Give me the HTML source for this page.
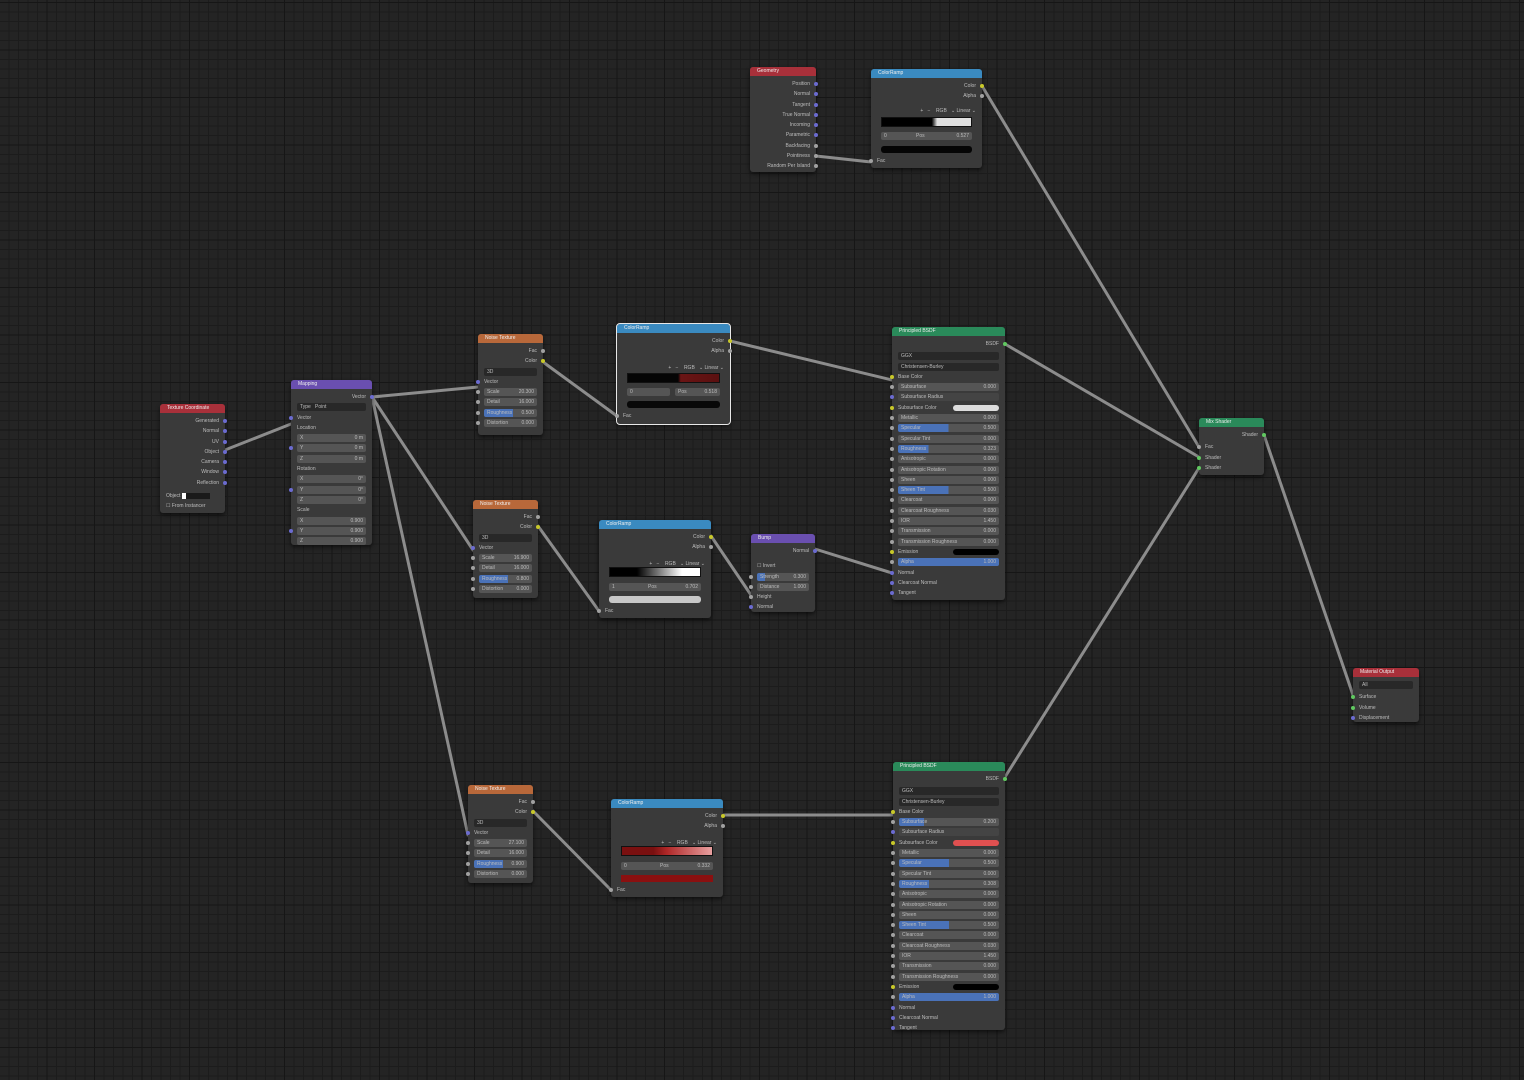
<!DOCTYPE html>
<html><head><meta charset="utf-8"><style>
*{box-sizing:border-box;margin:0;padding:0}
body{width:1524px;height:1080px;overflow:hidden;background:#242424;
background-image:linear-gradient(90deg,#161616 1px,transparent 1px),linear-gradient(#161616 1px,transparent 1px),linear-gradient(90deg,#1c1c1c 1px,transparent 1px),linear-gradient(#1c1c1c 1px,transparent 1px);
background-size:47.5px 47.5px,47.5px 47.5px,9.5px 9.5px,9.5px 9.5px;background-position:-1px 2px;position:relative;font-family:"Liberation Sans",sans-serif}
svg{position:absolute;left:0;top:0}
.n{position:absolute;background:#3a3a3a;border-radius:3px;font-size:5px;color:#bdbdbd;box-shadow:0 2px 4px rgba(0,0,0,.6)}
.sel{outline:1px solid #e8e8e8}
.h{height:9px;border-radius:3px 3px 0 0;color:#eee;padding-left:7px;line-height:9px;margin-bottom:3px}
.r{height:10.3px;line-height:10.3px;position:relative;padding:0 6px;white-space:nowrap}
.o{text-align:right}
.s{position:absolute;width:4px;height:4px;border-radius:50%;top:3px;background:#a1a1a1}
.o .s{right:-2px}.i .s{left:-2px}
.v{background:#6b6bd0}.y{background:#c8c829}.g{background:#60c860}
.f{position:absolute;left:6px;right:6px;top:1px;height:8px;background:#555;border-radius:2px;line-height:8px;padding:0 3px;display:flex;justify-content:space-between;overflow:hidden}
.d{position:absolute;left:6px;right:6px;top:1px;height:8px;background:#282828;border-radius:2px;line-height:8px;padding:0 3px}
.b{background:linear-gradient(90deg,#4a72b8 var(--p),#555 var(--p))}
.ramp{position:absolute;left:10px;right:10px;height:10px;border:1px solid #111}
</style></head><body>
<svg width="1524" height="1080"><g fill="none" stroke="#8c8c8c" stroke-width="3" stroke-linecap="round">
<path d="M225 450 L291 424"/>
<path d="M372 397 L478 387"/>
<path d="M372 397 L473 550"/>
<path d="M372 397 L468 835"/>
<path d="M543 362 L617 416"/>
<path d="M730 341 L892 380"/>
<path d="M538 526 L599 611"/>
<path d="M711 536 L751 595"/>
<path d="M815 549 L892 573"/>
<path d="M533 811 L611 890"/>
<path d="M723 815 L893 815"/>
<path d="M816 156 L871 162"/>
<path d="M982 86 L1199 447"/>
<path d="M1005 344 L1199 457"/>
<path d="M1005 777 L1199 468"/>
<path d="M1264 435 L1353 695"/>
</g></svg>

<div class="n" style="left:160px;top:404px;width:65px;height:109px">
<div class="h" style="background:#a8303a">Texture Coordinate</div>
<div class="r o">Generated<i class="s v"></i></div><div class="r o">Normal<i class="s v"></i></div><div class="r o">UV<i class="s v"></i></div><div class="r o">Object<i class="s v"></i></div><div class="r o">Camera<i class="s v"></i></div><div class="r o">Window<i class="s v"></i></div><div class="r o">Reflection<i class="s v"></i></div>
<div class="r" style="margin-top:3px">Object <span style="display:inline-block;width:28px;height:6px;background:#1a1a1a;vertical-align:middle;border-left:4px solid #fff"></span></div>
<div class="r">☐ From Instancer</div>
</div>

<div class="n" style="left:291px;top:380px;width:81px;height:165px">
<div class="h" style="background:#6a4fb0">Mapping</div>
<div class="r o">Vector<i class="s v"></i></div>
<div class="r"><div class="d">Type &nbsp; Point</div></div>
<div class="r i">Vector<i class="s v"></i></div>
<div class="r">Location</div>
<div class="r"><div class="f"><span>X</span><span>0 m</span></div></div>
<div class="r i"><i class="s v"></i><div class="f"><span>Y</span><span>0 m</span></div></div>
<div class="r"><div class="f"><span>Z</span><span>0 m</span></div></div>
<div class="r">Rotation</div>
<div class="r"><div class="f"><span>X</span><span>0°</span></div></div>
<div class="r i"><i class="s v"></i><div class="f"><span>Y</span><span>0°</span></div></div>
<div class="r"><div class="f"><span>Z</span><span>0°</span></div></div>
<div class="r">Scale</div>
<div class="r"><div class="f"><span>X</span><span>0.900</span></div></div>
<div class="r i"><i class="s v"></i><div class="f"><span>Y</span><span>0.900</span></div></div>
<div class="r"><div class="f"><span>Z</span><span>0.900</span></div></div>
</div>

<div class="n" style="left:478px;top:334px;width:65px;height:101px">
<div class="h" style="background:#b8683a">Noise Texture</div>
<div class="r o">Fac<i class="s"></i></div><div class="r o">Color<i class="s y"></i></div>
<div class="r"><div class="d">3D</div></div>
<div class="r i">Vector<i class="s v"></i></div>
<div class="r i"><i class="s"></i><div class="f"><span>Scale</span><span>20.300</span></div></div>
<div class="r i"><i class="s"></i><div class="f"><span>Detail</span><span>16.000</span></div></div>
<div class="r i"><i class="s"></i><div class="f b" style="--p:55%"><span>Roughness</span><span>0.500</span></div></div>
<div class="r i"><i class="s"></i><div class="f"><span>Distortion</span><span>0.000</span></div></div>
</div>

<div class="n" style="left:473px;top:500px;width:65px;height:98px">
<div class="h" style="background:#b8683a">Noise Texture</div>
<div class="r o">Fac<i class="s"></i></div><div class="r o">Color<i class="s y"></i></div>
<div class="r"><div class="d">3D</div></div>
<div class="r i">Vector<i class="s v"></i></div>
<div class="r i"><i class="s"></i><div class="f"><span>Scale</span><span>16.900</span></div></div>
<div class="r i"><i class="s"></i><div class="f"><span>Detail</span><span>16.000</span></div></div>
<div class="r i"><i class="s"></i><div class="f b" style="--p:55%"><span>Roughness</span><span>0.800</span></div></div>
<div class="r i"><i class="s"></i><div class="f"><span>Distortion</span><span>0.000</span></div></div>
</div>

<div class="n" style="left:468px;top:785px;width:65px;height:98px">
<div class="h" style="background:#b8683a">Noise Texture</div>
<div class="r o">Fac<i class="s"></i></div><div class="r o">Color<i class="s y"></i></div>
<div class="r"><div class="d">3D</div></div>
<div class="r i">Vector<i class="s v"></i></div>
<div class="r i"><i class="s"></i><div class="f"><span>Scale</span><span>27.100</span></div></div>
<div class="r i"><i class="s"></i><div class="f"><span>Detail</span><span>16.000</span></div></div>
<div class="r i"><i class="s"></i><div class="f b" style="--p:55%"><span>Roughness</span><span>0.900</span></div></div>
<div class="r i"><i class="s"></i><div class="f"><span>Distortion</span><span>0.000</span></div></div>
</div>

<div class="n sel" style="left:617px;top:324px;width:113px;height:100px">
<div class="h" style="background:#3a8ac0">ColorRamp</div>
<div class="r o">Color<i class="s y"></i></div><div class="r o">Alpha<i class="s"></i></div>
<div class="r o" style="margin-top:6px">+ &nbsp; − &nbsp;&nbsp; RGB &nbsp; ⌄ Linear ⌄</div>
<div class="ramp" style="top:49px;background:linear-gradient(90deg,#050505 55%,#6a1414 58%,#5a1010)"></div>
<div class="f" style="top:64px;left:10px;right:60px"><span>0</span></div>
<div class="f" style="top:64px;left:58px;right:10px"><span>Pos</span><span>0.518</span></div>
<div class="ramp" style="top:77px;height:7px;border-radius:3px;background:#080808;border:none"></div>
<div class="r i" style="position:absolute;top:87px;width:100%">Fac<i class="s"></i></div>
</div>

<div class="n" style="left:599px;top:520px;width:112px;height:98px">
<div class="h" style="background:#3a8ac0">ColorRamp</div>
<div class="r o">Color<i class="s y"></i></div><div class="r o">Alpha<i class="s"></i></div>
<div class="r o" style="margin-top:6px">+ &nbsp; − &nbsp;&nbsp; RGB &nbsp; ⌄ Linear ⌄</div>
<div class="ramp" style="top:47px;background:linear-gradient(90deg,#000 30%,#fff 80%,#fff)"></div>
<div class="f" style="top:63px;left:10px;right:60px"><span>1</span></div>
<div class="f" style="top:63px;left:46px;right:10px"><span>Pos</span><span>0.702</span></div>
<div class="ramp" style="top:76px;height:7px;border-radius:3px;background:#c8c8c8;border:none"></div>
<div class="r i" style="position:absolute;top:86px;width:100%">Fac<i class="s"></i></div>
</div>

<div class="n" style="left:611px;top:799px;width:112px;height:98px">
<div class="h" style="background:#3a8ac0">ColorRamp</div>
<div class="r o">Color<i class="s y"></i></div><div class="r o">Alpha<i class="s"></i></div>
<div class="r o" style="margin-top:6px">+ &nbsp; − &nbsp;&nbsp; RGB &nbsp; ⌄ Linear ⌄</div>
<div class="ramp" style="top:47px;background:linear-gradient(90deg,#7a1010 35%,#b02828 50%,#e8a0a0)"></div>
<div class="f" style="top:63px;left:10px;right:60px"><span>0</span></div>
<div class="f" style="top:63px;left:46px;right:10px"><span>Pos</span><span>0.332</span></div>
<div class="ramp" style="top:76px;height:7px;background:#8a1010;border:none"></div>
<div class="r i" style="position:absolute;top:86px;width:100%">Fac<i class="s"></i></div>
</div>

<div class="n" style="left:751px;top:534px;width:64px;height:78px">
<div class="h" style="background:#6a4fb0">Bump</div>
<div class="r o">Normal<i class="s v"></i></div>
<div class="r" style="margin-top:5px">☐ Invert</div>
<div class="r i"><i class="s"></i><div class="f b" style="--p:15%"><span>Strength</span><span>0.300</span></div></div>
<div class="r i"><i class="s"></i><div class="f"><span>Distance</span><span>1.000</span></div></div>
<div class="r i">Height<i class="s"></i></div>
<div class="r i">Normal<i class="s v"></i></div>
</div>

<div class="n" style="left:750px;top:67px;width:66px;height:105px">
<div class="h" style="background:#a8303a">Geometry</div>
<div class="r o">Position<i class="s v"></i></div><div class="r o">Normal<i class="s v"></i></div><div class="r o">Tangent<i class="s v"></i></div><div class="r o">True Normal<i class="s v"></i></div><div class="r o">Incoming<i class="s v"></i></div><div class="r o">Parametric<i class="s v"></i></div><div class="r o">Backfacing<i class="s"></i></div><div class="r o">Pointiness<i class="s"></i></div><div class="r o">Random Per Island<i class="s"></i></div>
</div>

<div class="n" style="left:871px;top:69px;width:111px;height:99px">
<div class="h" style="background:#3a8ac0">ColorRamp</div>
<div class="r o">Color<i class="s y"></i></div><div class="r o">Alpha<i class="s"></i></div>
<div class="r o" style="margin-top:4px">+ &nbsp; − &nbsp;&nbsp; RGB &nbsp; ⌄ Linear ⌄</div>
<div class="ramp" style="top:48px;background:linear-gradient(90deg,#000 56%,#e0e0e0 62%)"></div>
<div class="f" style="top:63px;left:10px;right:60px"><span>0</span></div>
<div class="f" style="top:63px;left:42px;right:10px"><span>Pos</span><span>0.527</span></div>
<div class="ramp" style="top:77px;height:7px;border-radius:3px;background:#050505;border:none"></div>
<div class="r i" style="position:absolute;top:87px;width:100%">Fac<i class="s"></i></div>
</div>

<div class="n" style="left:892px;top:327px;width:113px;height:273px">
<div class="h" style="background:#2a8a5a">Principled BSDF</div>
<div class="r o">BSDF<i class="s g"></i></div>
<div class="r" style="margin-top:2px"><div class="d">GGX</div></div>
<div class="r"><div class="d">Christensen-Burley</div></div>
<div class="r i">Base Color<i class="s y"></i></div>
<div class="r i"><i class="s"></i><div class="f"><span>Subsurface</span><span>0.000</span></div></div>
<div class="r i"><i class="s v"></i><div class="d" style="background:#444">Subsurface Radius</div></div>
<div class="r i"><i class="s y"></i>Subsurface Color<span style="position:absolute;right:6px;top:2px;width:46px;height:6px;border-radius:3px;background:#ddd"></span></div>
<div class="r i"><i class="s"></i><div class="f"><span>Metallic</span><span>0.000</span></div></div>
<div class="r i"><i class="s"></i><div class="f b" style="--p:50%"><span>Specular</span><span>0.500</span></div></div>
<div class="r i"><i class="s"></i><div class="f"><span>Specular Tint</span><span>0.000</span></div></div>
<div class="r i"><i class="s"></i><div class="f b" style="--p:30%"><span>Roughness</span><span>0.323</span></div></div>
<div class="r i"><i class="s"></i><div class="f"><span>Anisotropic</span><span>0.000</span></div></div>
<div class="r i"><i class="s"></i><div class="f"><span>Anisotropic Rotation</span><span>0.000</span></div></div>
<div class="r i"><i class="s"></i><div class="f"><span>Sheen</span><span>0.000</span></div></div>
<div class="r i"><i class="s"></i><div class="f b" style="--p:50%"><span>Sheen Tint</span><span>0.500</span></div></div>
<div class="r i"><i class="s"></i><div class="f"><span>Clearcoat</span><span>0.000</span></div></div>
<div class="r i"><i class="s"></i><div class="f"><span>Clearcoat Roughness</span><span>0.030</span></div></div>
<div class="r i"><i class="s"></i><div class="f"><span>IOR</span><span>1.450</span></div></div>
<div class="r i"><i class="s"></i><div class="f"><span>Transmission</span><span>0.000</span></div></div>
<div class="r i"><i class="s"></i><div class="f"><span>Transmission Roughness</span><span>0.000</span></div></div>
<div class="r i"><i class="s y"></i>Emission<span style="position:absolute;right:6px;top:2px;width:46px;height:6px;border-radius:3px;background:#000"></span></div>
<div class="r i"><i class="s"></i><div class="f b" style="--p:100%"><span>Alpha</span><span>1.000</span></div></div>
<div class="r i">Normal<i class="s v"></i></div>
<div class="r i">Clearcoat Normal<i class="s v"></i></div>
<div class="r i">Tangent<i class="s v"></i></div>
</div>

<div class="n" style="left:893px;top:762px;width:112px;height:268px">
<div class="h" style="background:#2a8a5a">Principled BSDF</div>
<div class="r o">BSDF<i class="s g"></i></div>
<div class="r" style="margin-top:2px"><div class="d">GGX</div></div>
<div class="r"><div class="d">Christensen-Burley</div></div>
<div class="r i">Base Color<i class="s y"></i></div>
<div class="r i"><i class="s"></i><div class="f b" style="--p:25%"><span>Subsurface</span><span>0.200</span></div></div>
<div class="r i"><i class="s v"></i><div class="d" style="background:#444">Subsurface Radius</div></div>
<div class="r i"><i class="s y"></i>Subsurface Color<span style="position:absolute;right:6px;top:2px;width:46px;height:6px;border-radius:3px;background:#e05050"></span></div>
<div class="r i"><i class="s"></i><div class="f"><span>Metallic</span><span>0.000</span></div></div>
<div class="r i"><i class="s"></i><div class="f b" style="--p:50%"><span>Specular</span><span>0.500</span></div></div>
<div class="r i"><i class="s"></i><div class="f"><span>Specular Tint</span><span>0.000</span></div></div>
<div class="r i"><i class="s"></i><div class="f b" style="--p:30%"><span>Roughness</span><span>0.308</span></div></div>
<div class="r i"><i class="s"></i><div class="f"><span>Anisotropic</span><span>0.000</span></div></div>
<div class="r i"><i class="s"></i><div class="f"><span>Anisotropic Rotation</span><span>0.000</span></div></div>
<div class="r i"><i class="s"></i><div class="f"><span>Sheen</span><span>0.000</span></div></div>
<div class="r i"><i class="s"></i><div class="f b" style="--p:50%"><span>Sheen Tint</span><span>0.500</span></div></div>
<div class="r i"><i class="s"></i><div class="f"><span>Clearcoat</span><span>0.000</span></div></div>
<div class="r i"><i class="s"></i><div class="f"><span>Clearcoat Roughness</span><span>0.030</span></div></div>
<div class="r i"><i class="s"></i><div class="f"><span>IOR</span><span>1.450</span></div></div>
<div class="r i"><i class="s"></i><div class="f"><span>Transmission</span><span>0.000</span></div></div>
<div class="r i"><i class="s"></i><div class="f"><span>Transmission Roughness</span><span>0.000</span></div></div>
<div class="r i"><i class="s y"></i>Emission<span style="position:absolute;right:6px;top:2px;width:46px;height:6px;border-radius:3px;background:#000"></span></div>
<div class="r i"><i class="s"></i><div class="f b" style="--p:100%"><span>Alpha</span><span>1.000</span></div></div>
<div class="r i">Normal<i class="s v"></i></div>
<div class="r i">Clearcoat Normal<i class="s v"></i></div>
<div class="r i">Tangent<i class="s v"></i></div>
</div>

<div class="n" style="left:1199px;top:418px;width:65px;height:57px">
<div class="h" style="background:#2a8a5a">Mix Shader</div>
<div class="r o">Shader<i class="s g"></i></div>
<div class="r i" style="margin-top:2px">Fac<i class="s"></i></div>
<div class="r i">Shader<i class="s g"></i></div>
<div class="r i">Shader<i class="s g"></i></div>
</div>

<div class="n" style="left:1353px;top:668px;width:66px;height:54px">
<div class="h" style="background:#a8303a">Material Output</div>
<div class="r"><div class="d">All</div></div>
<div class="r i" style="margin-top:2px">Surface<i class="s g"></i></div>
<div class="r i">Volume<i class="s g"></i></div>
<div class="r i">Displacement<i class="s v"></i></div>
</div>
</body></html>
